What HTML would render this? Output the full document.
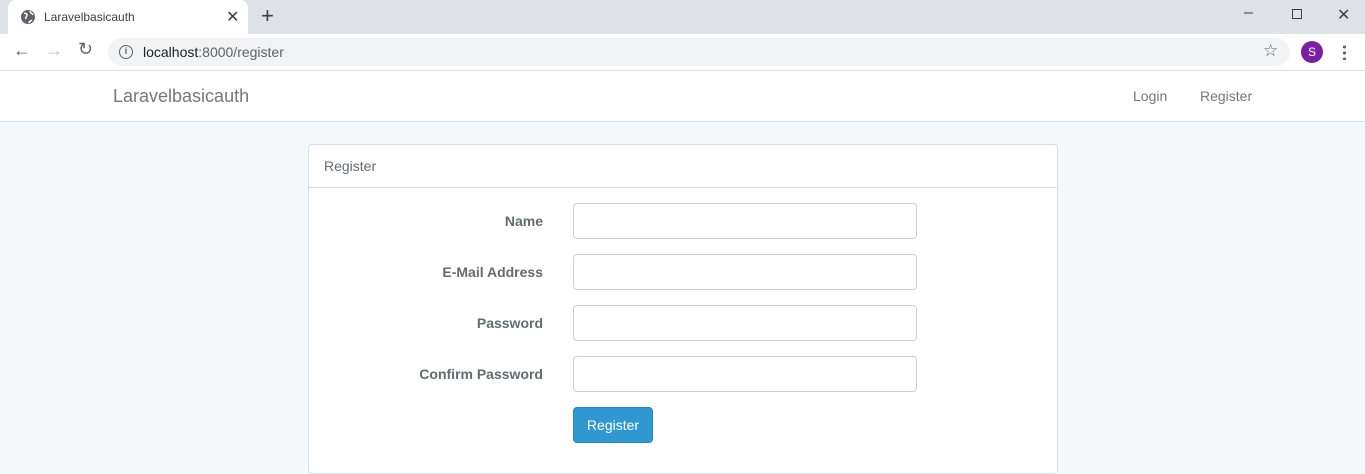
<!DOCTYPE html>
<html><head><style>
*{box-sizing:border-box;margin:0;padding:0}
body{width:1365px;height:463px;overflow:hidden;background:#f5f8fa;font-family:"Liberation Sans",sans-serif;position:relative}
.abs{position:absolute}
.tabbar{left:0;top:0;width:1365px;height:34px;background:#dee1e6}
.tab{left:8px;top:0;width:240px;height:34px;background:#fff;border-radius:8px 8px 0 0}
.toolbar{left:0;top:34px;width:1365px;height:37px;background:#fff;border-bottom:1px solid #dadce0}
.omni{left:108px;top:38px;width:1182px;height:28px;background:#f1f3f4;border-radius:14px}
.nav{left:0;top:71px;width:1365px;height:51px;background:#fff;border-bottom:1px solid #d3e0e9}
.panel{left:308px;top:144px;width:750px;height:330px;background:#fff;border:1px solid #d3e0e9;border-radius:4px}
.ph{left:0;top:0;width:748px;height:43px;background:#fff;border-bottom:1px solid #d3e0e9;border-radius:4px 4px 0 0;padding:13px 15px;font-size:14px;color:#636b6f}
.lbl{width:235px;text-align:right;font-size:14px;font-weight:bold;color:#636b6f;left:308px}
.inp{left:573px;width:344px;height:36px;border:1px solid #ccd0d2;border-radius:4px;background:#fff}
.btn{left:573px;top:407px;width:80px;height:36px;background:#3097d1;border:1px solid #2a88bd;border-radius:4px;color:#fff;font-size:14px;text-align:center;line-height:34px}
</style></head><body>
<div class="abs tabbar"></div>
<div class="abs tab"></div>
<svg class="abs" style="left:20px;top:9px" width="16" height="16" viewBox="0 0 16 16"><circle cx="8" cy="8" r="7" fill="#5f6368"/><path d="M4 4c2 1 3 0 3 2s-2 2-1 4M10 2c0 2 2 2 3 4M9 14c0-2 2-2 3-3" stroke="#fff" stroke-width="1.5" fill="none"/></svg>
<div class="abs" style="left:44px;top:10px;font-size:12px;color:#3c4043">Laravelbasicauth</div>
<div class="abs" style="left:226px;top:7px;font-size:16px;color:#3c4043">✕</div>
<div class="abs" style="left:261px;top:3px;font-size:22px;color:#3c4043">+</div>
<div class="abs" style="left:1244px;top:4px;font-size:16px;color:#3c4043">–</div>
<div class="abs" style="left:1292px;top:9px;width:10px;height:10px;border:1.5px solid #3c4043"></div>
<div class="abs" style="left:1337px;top:5px;font-size:16px;color:#3c4043">✕</div>
<div class="abs toolbar"></div>
<div class="abs" style="left:13px;top:40px;font-size:18px;color:#5f6368">←</div>
<div class="abs" style="left:45px;top:40px;font-size:18px;color:#bdc1c6">→</div>
<div class="abs" style="left:78px;top:39px;font-size:18px;color:#5f6368">↻</div>
<div class="abs omni"></div>
<div class="abs" style="left:119px;top:45px;width:14px;height:14px;border:1.5px solid #5f6368;border-radius:50%;font-size:9px;text-align:center;line-height:11px;color:#5f6368;font-weight:bold">i</div>
<div class="abs" style="left:143px;top:44px;font-size:14px;color:#202124">localhost<span style="color:#5f6368">:8000/register</span></div>
<div class="abs" style="left:1263px;top:41px;font-size:17px;color:#5f6368">☆</div>
<div class="abs" style="left:1301px;top:41px;width:22px;height:22px;border-radius:50%;background:#7b1fa2;color:#fff;font-size:12px;text-align:center;line-height:22px">S</div>
<div class="abs" style="left:1343px;top:44px;width:3px;height:16px;background:radial-gradient(circle,#5f6368 1.5px,transparent 1.6px) 0 0/3px 6px"></div>
<div class="abs nav"></div>
<div class="abs" style="left:113px;top:86px;font-size:18px;color:#777">Laravelbasicauth</div>
<div class="abs" style="left:1133px;top:88px;font-size:14px;color:#777">Login</div>
<div class="abs" style="left:1200px;top:88px;font-size:14px;color:#777">Register</div>
<div class="abs panel"><div class="abs ph">Register</div></div>
<div class="abs lbl" style="top:213px">Name</div>
<div class="abs lbl" style="top:264px">E-Mail Address</div>
<div class="abs lbl" style="top:315px">Password</div>
<div class="abs lbl" style="top:366px">Confirm Password</div>
<div class="abs inp" style="top:203px"></div>
<div class="abs inp" style="top:254px"></div>
<div class="abs inp" style="top:305px"></div>
<div class="abs inp" style="top:356px"></div>
<div class="abs btn">Register</div>
</body></html>
